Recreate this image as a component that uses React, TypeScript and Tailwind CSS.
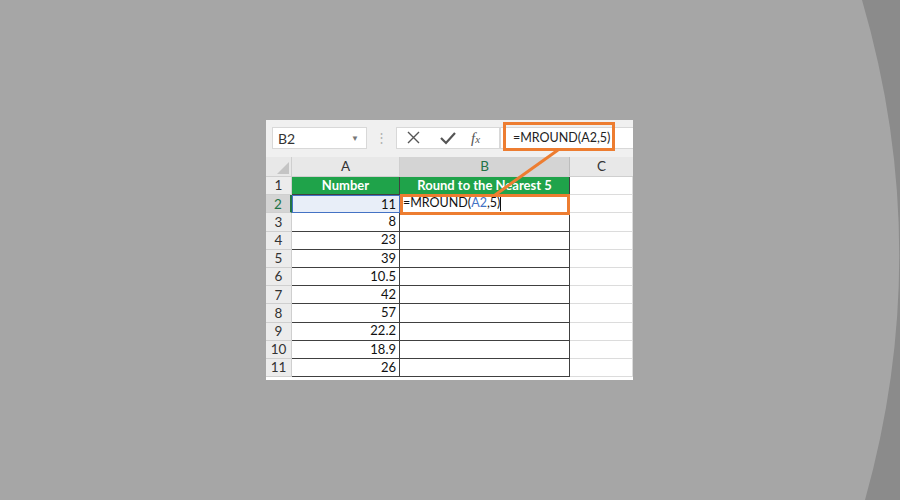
import React from "react";

const values = ["11", "8", "23", "39", "10.5", "42", "57", "22.2", "18.9", "26"];

export default function App() {
  const font = { fontFamily: "Lato, 'Open Sans', sans-serif" };
  return (
    <div className="relative w-[900px] h-[500px] overflow-hidden bg-[#a6a6a6]" style={font}>
      <svg className="absolute inset-0" width="900" height="500" viewBox="0 0 900 500">
        <path d="M862 0 Q 935 250 865 500 L 900 500 L 900 0 Z" fill="#8b8b8b" />
      </svg>
      <div className="relative pl-[266px] pt-[120px]">
        <div className="relative w-[367px] h-[260px] bg-[#f0f0f0] flex flex-col">
          {/* formula bar */}
          <div className="h-[37px] flex items-start pt-[7px] pl-[6px]">
            <div className="w-[95px] h-[22px] bg-white border border-[#d8d8d8] flex items-center justify-between pl-[5px] pr-[7px]">
              <span className="text-[14px] text-[#333]">B2</span>
              <span className="text-[8px] text-[#777]">▼</span>
            </div>
            <div className="w-[29px] h-[22px] flex items-center justify-center text-[#b0b0b0] text-[13px]">⋮</div>
            <div className="w-[104px] h-[22px] bg-white border border-[#d8d8d8] flex items-center">
              <svg width="34" height="20" viewBox="0 0 34 20">
                <path d="M11 4 L22 15 M22 4 L11 15" stroke="#555" strokeWidth="1.4" fill="none" />
              </svg>
              <svg width="34" height="20" viewBox="0 0 34 20">
                <path d="M10 10 L15 15 L24 5" stroke="#555" strokeWidth="2.2" fill="none" />
              </svg>
              <span className="text-[15px] italic text-[#555] pl-[6px]" style={{ fontFamily: "'Liberation Serif', serif" }}>
                f<span className="text-[11px]">x</span>
              </span>
            </div>
            <div className="flex-1 h-[22px] bg-white border-y border-l border-[#d8d8d8] flex items-center pl-[12px]">
              <span className="text-[12.5px] text-[#222]">=MROUND(A2,5)</span>
            </div>
          </div>
          {/* grid */}
          <div className="bg-white flex-1 flex flex-col">
            {/* header row */}
            <div className="flex h-[20px] bg-[#e8e8e8] border-b border-[#cfcfcf] text-[13.5px] text-[#333]">
              <div className="w-[26px] border-r border-[#cfcfcf] relative">
                <svg className="absolute right-[2px] bottom-[2px]" width="12" height="12" viewBox="0 0 12 12">
                  <path d="M12 0 L12 12 L0 12 Z" fill="#c4c4c4" />
                </svg>
              </div>
              <div className="w-[108px] border-r border-[#cfcfcf] flex items-center justify-center">A</div>
              <div className="w-[170px] border-r border-[#bdbdbd] bg-[#d4d4d4] flex items-center justify-center text-[#217346]">B</div>
              <div className="flex-1 flex items-center justify-center">C</div>
            </div>
            {/* row 1 */}
            <div className="flex h-[18.2px] text-[13px]">
              <div className="w-[26px] bg-[#ececec] border-r border-b border-[#cfcfcf] flex items-center justify-center text-[#333] text-[13.5px]">1</div>
              <div className="w-[108px] bg-[#1fa34a] border-r border-b border-[#404040] flex items-center justify-center font-bold text-white">Number</div>
              <div className="w-[170px] bg-[#1fa34a] border-r border-b border-[#404040] flex items-center justify-center font-bold text-white">Round to the Nearest 5</div>
              <div className="flex-1 border-b border-r border-[#dcdcdc]" />
            </div>
            {values.map((v, i) => (
              <div key={i} className="flex h-[18.2px] text-[13px]">
                <div
                  className={
                    i === 0
                      ? "w-[26px] bg-[#d4d4d4] border-r-2 border-r-[#217346] border-b border-b-[#cfcfcf] flex items-center justify-center text-[#217346] text-[13.5px]"
                      : "w-[26px] bg-[#ececec] border-r border-b border-[#cfcfcf] flex items-center justify-center text-[#333] text-[13.5px]"
                  }
                >
                  {i + 2}
                </div>
                <div
                  className={
                    i === 0
                      ? "w-[108px] bg-[#e8eef8] border-[1.5px] border-[#4472c4] flex items-center justify-end pr-[3px] text-[#111]"
                      : "w-[108px] border-r border-b border-[#404040] flex items-center justify-end pr-[3px] text-[#111]"
                  }
                >
                  {v}
                </div>
                <div className="w-[170px] border-r border-b border-[#404040] flex items-center pl-[3px] text-[#111]">
                  {i === 0 ? (
                    <span className="text-[12.5px]">
                      =MROUND(<span className="text-[#4472c4]">A2</span>,5)
                      <span className="inline-block w-[1px] h-[14px] bg-[#111] align-middle" />
                    </span>
                  ) : null}
                </div>
                <div className="flex-1 border-b border-r border-[#dcdcdc]" />
              </div>
            ))}
          </div>
          {/* overlays */}
          <div className="absolute left-[237px] top-[2px] w-[112px] h-[29px] border-[3px] border-[#ed7d31]" />
          <div className="absolute left-[134px] top-[74px] w-[170px] h-[21px] border-[3px] border-[#ed7d31]" />
          <svg className="absolute left-0 top-0 pointer-events-none" width="367" height="260" viewBox="0 0 367 260">
            <line x1="292" y1="30" x2="229" y2="75" stroke="#ed7d31" strokeWidth="3" />
          </svg>
        </div>
      </div>
    </div>
  );
}
